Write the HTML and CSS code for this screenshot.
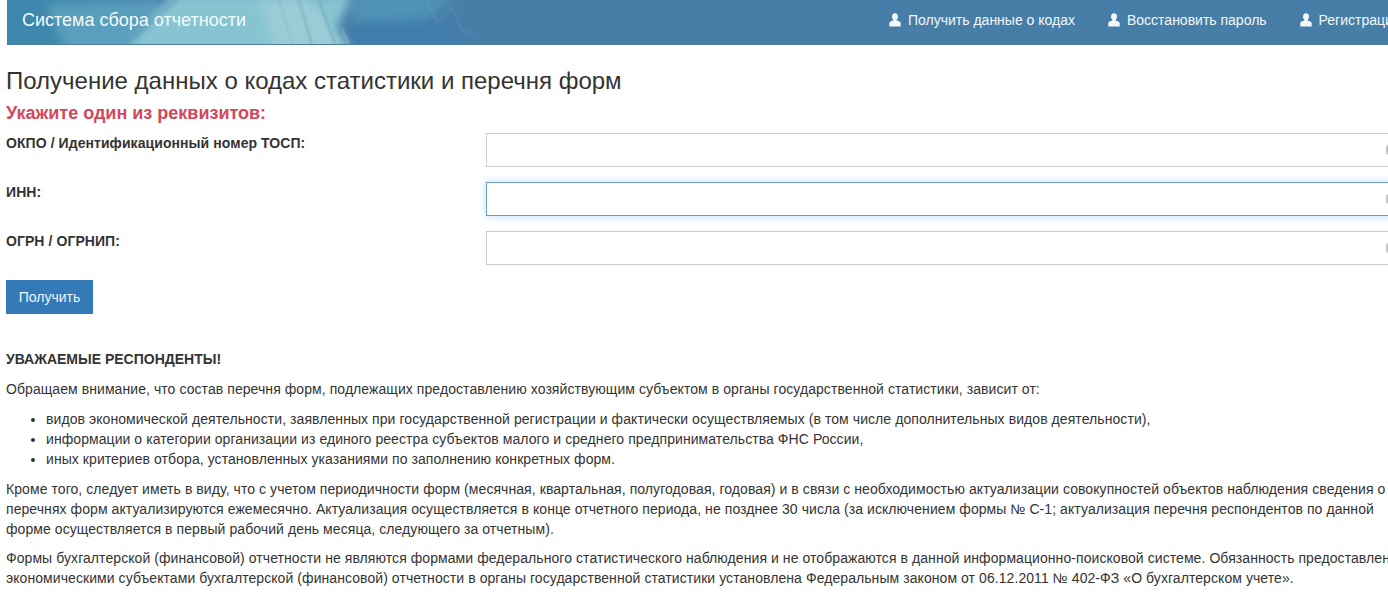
FILE: index.html
```html
<!DOCTYPE html>
<html lang="ru">
<head>
  <meta charset="UTF-8" />
  <title>Система сбора отчетности</title>
  <link rel="stylesheet" href="styles.css">
</head>
<body>
  <div class="page">
    <header class="navbar">
      <svg class="navbar-art" viewBox="0 0 520 45" preserveAspectRatio="none" aria-hidden="true">
        <defs>
          <filter id="soft" x="-10%" y="-30%" width="120%" height="160%"><feGaussianBlur stdDeviation="5"/></filter>
          <filter id="soft2"><feGaussianBlur stdDeviation="0.8"/></filter>
        </defs>
        <g filter="url(#soft)">
          <polygon points="-10,-10 110,-10 120,55 -10,55" fill="#3e87ac"/>
          <polygon points="40,5 150,0 165,55 60,55" fill="#5a9fbd"/>
          <polygon points="165,-5 345,-5 330,28 345,55 115,55" fill="#86c4d2"/>
          <polygon points="250,-5 300,-5 345,55 270,55" fill="#99ccd6"/>
          <polygon points="345,25 425,12 470,55 340,55" fill="#3f7dab"/>
          <polygon points="345,-5 450,-5 420,20 345,22" fill="#4f92b6"/>
        </g>
        <g filter="url(#soft2)" fill="none" stroke-width="1">
          <line x1="170" y1="0" x2="118" y2="45" stroke="#4a90b0" stroke-width="4" opacity="0.25"/>
          <line x1="272" y1="0" x2="285" y2="45" stroke="#6aa5b8" opacity="0.6"/>
          <line x1="292" y1="0" x2="305" y2="45" stroke="#5f9cb0" stroke-width="1.5" opacity="0.6"/>
          <line x1="312" y1="0" x2="328" y2="45" stroke="#568fa6" stroke-width="1.5" opacity="0.6"/>
          <line x1="335" y1="28" x2="342" y2="45" stroke="#c8eef0" opacity="0.7"/>
          <polyline points="420,0 430,22 445,8 455,30 470,36" stroke="#8fb6cf" stroke-width="0.7" opacity="0.5"/>
        </g>
      </svg>
      <a class="brand" href="#">Система сбора отчетности</a>
      <nav class="nav-links">
        <a href="#"><svg class="user-icon" viewBox="0 0 12 14"><path d="M6 0.2 C8 0.2 9 1.8 9 3.6 C9 5 8.4 6.2 7.6 6.9 L7.6 7.6 C9.8 8.2 11.7 8.8 11.7 10.6 L11.7 13.6 L0.3 13.6 L0.3 10.6 C0.3 8.8 2.2 8.2 4.4 7.6 L4.4 6.9 C3.6 6.2 3 5 3 3.6 C3 1.8 4 0.2 6 0.2 Z"/></svg>Получить данные о кодах</a>
        <a href="#"><svg class="user-icon" viewBox="0 0 12 14"><path d="M6 0.2 C8 0.2 9 1.8 9 3.6 C9 5 8.4 6.2 7.6 6.9 L7.6 7.6 C9.8 8.2 11.7 8.8 11.7 10.6 L11.7 13.6 L0.3 13.6 L0.3 10.6 C0.3 8.8 2.2 8.2 4.4 7.6 L4.4 6.9 C3.6 6.2 3 5 3 3.6 C3 1.8 4 0.2 6 0.2 Z"/></svg>Восстановить пароль</a>
        <a href="#"><svg class="user-icon" viewBox="0 0 12 14"><path d="M6 0.2 C8 0.2 9 1.8 9 3.6 C9 5 8.4 6.2 7.6 6.9 L7.6 7.6 C9.8 8.2 11.7 8.8 11.7 10.6 L11.7 13.6 L0.3 13.6 L0.3 10.6 C0.3 8.8 2.2 8.2 4.4 7.6 L4.4 6.9 C3.6 6.2 3 5 3 3.6 C3 1.8 4 0.2 6 0.2 Z"/></svg>Регистрация</a>
      </nav>
    </header>

    <main class="content">
      <h1>Получение данных о кодах статистики и перечня форм</h1>
      <h2 class="hint">Укажите один из реквизитов:</h2>

      <form class="search-form">
        <div class="form-row">
          <label for="okpo">ОКПО / Идентификационный номер ТОСП:</label>
          <div class="field"><input id="okpo" type="text"><span class="field-mark"></span></div>
        </div>
        <div class="form-row">
          <label for="inn">ИНН:</label>
          <div class="field"><input id="inn" class="focused" type="text"><span class="field-mark"></span></div>
        </div>
        <div class="form-row">
          <label for="ogrn">ОГРН / ОГРНИП:</label>
          <div class="field"><input id="ogrn" type="text"><span class="field-mark"></span></div>
        </div>
        <button type="button">Получить</button>
      </form>

      <div class="notice">
        <p class="notice-title">УВАЖАЕМЫЕ РЕСПОНДЕНТЫ!</p>
        <p>Обращаем внимание, что состав перечня форм, подлежащих предоставлению хозяйствующим субъектом в органы государственной статистики, зависит от:</p>
        <ul>
          <li>видов экономической деятельности, заявленных при государственной регистрации и фактически осуществляемых (в том числе дополнительных видов деятельности),</li>
          <li>информации о категории организации из единого реестра субъектов малого и среднего предпринимательства ФНС России,</li>
          <li>иных критериев отбора, установленных указаниями по заполнению конкретных форм.</li>
        </ul>
        <p class="short-gap">Кроме того, следует иметь в виду, что с учетом периодичности форм (месячная, квартальная, полугодовая, годовая) и в связи с необходимостью актуализации совокупностей объектов наблюдения сведения о<br>перечнях форм актуализируются ежемесячно. Актуализация осуществляется в конце отчетного периода, не позднее 30 числа (за исключением формы № С-1; актуализация перечня респондентов по данной<br>форме осуществляется в первый рабочий день месяца, следующего за отчетным).</p>
        <p>Формы бухгалтерской (финансовой) отчетности не являются формами федерального статистического наблюдения и не отображаются в данной информационно-поисковой системе. Обязанность предоставления<br>экономическими субъектами бухгалтерской (финансовой) отчетности в органы государственной статистики установлена Федеральным законом от 06.12.2011 № 402-ФЗ «О бухгалтерском учете».</p>
      </div>
    </main>
  </div>
</body>
</html>
```

FILE: styles.css
```css
html, body {
  margin: 0;
  padding: 0;
  overflow: hidden;
  height: 594px;
  background: #fff;
}

body {
  font-family: "Liberation Sans", Arial, sans-serif;
  font-size: 14px;
  letter-spacing: 0.07px;
  line-height: 20px;
  color: #333;
}

.page {
  width: 1480px;
  margin-left: 6px;
}

.navbar {
  position: relative;
  display: flex;
  align-items: center;
  justify-content: space-between;
  height: 45px;
  margin-left: 1px;
  padding: 0 0 5px 15px;
  box-sizing: border-box;
  overflow: hidden;
  background: #467ea8;
  border-bottom: 1px solid #4f7f9f;
}

.navbar-art {
  position: absolute;
  left: 0;
  top: 0;
  width: 520px;
  height: 45px;
}

.brand {
  position: relative;
  color: #f2fafc;
  font-size: 18px;
  letter-spacing: 0;
  text-decoration: none;
}

.nav-links {
  position: relative;
  display: flex;
  gap: 33px;
  width: 597px;
}

.nav-links a {
  display: flex;
  align-items: center;
  gap: 7px;
  color: #f2f7fa;
  font-size: 14px;
  letter-spacing: 0;
  text-decoration: none;
  white-space: nowrap;
}

.user-icon {
  width: 12px;
  height: 14px;
  fill: #f4f8fa;
}

.content {
  padding-top: 20px;
}

h1 {
  margin: 0;
  font-size: 24px;
  font-weight: 400;
  letter-spacing: 0;
  line-height: 32px;
  color: #333;
}

.hint {
  margin: 6px 0 0;
  font-size: 18px;
  font-weight: 700;
  letter-spacing: 0;
  line-height: 20px;
  color: #d4475a;
}

.search-form {
  margin-top: 10px;
}

.form-row {
  display: flex;
  height: 34px;
  margin-bottom: 15px;
}

.form-row label {
  width: 480px;
  font-size: 14px;
  font-weight: 700;
  line-height: 20px;
}

.field {
  position: relative;
  flex: 1;
}

.field input {
  display: block;
  width: 100%;
  box-sizing: border-box;
  height: 34px;
  padding: 6px 12px;
  border: 1px solid #ccc;
  background: #fff;
  outline: none;
}

.field input.focused {
  border-color: #6f9fbd;
  box-shadow: inset 0 1px 1px rgba(0, 0, 0, 0.03), 0 0 8px rgba(102, 175, 233, 0.45);
}

.field-mark {
  position: absolute;
  left: 900px;
  top: 12px;
  width: 8px;
  height: 10px;
  border-radius: 3px;
  background: #c4c4c4;
}

button {
  display: block;
  width: 87px;
  height: 34px;
  border: 1px solid #337ab7;
  background: #337ab7;
  color: #f0f6fa;
  font-family: inherit;
  font-size: 14px;
}

.notice {
  margin-top: 35px;
}

.notice p {
  margin: 0 0 10px;
  white-space: nowrap;
}

.notice .notice-title {
  margin-bottom: 10px;
  font-weight: 700;
  letter-spacing: 0;
}

.notice ul {
  margin: 0 0 10px;
  padding-left: 40px;
}

.notice li {
  white-space: nowrap;
}

.notice .short-gap {
  margin-bottom: 9px;
}
```
